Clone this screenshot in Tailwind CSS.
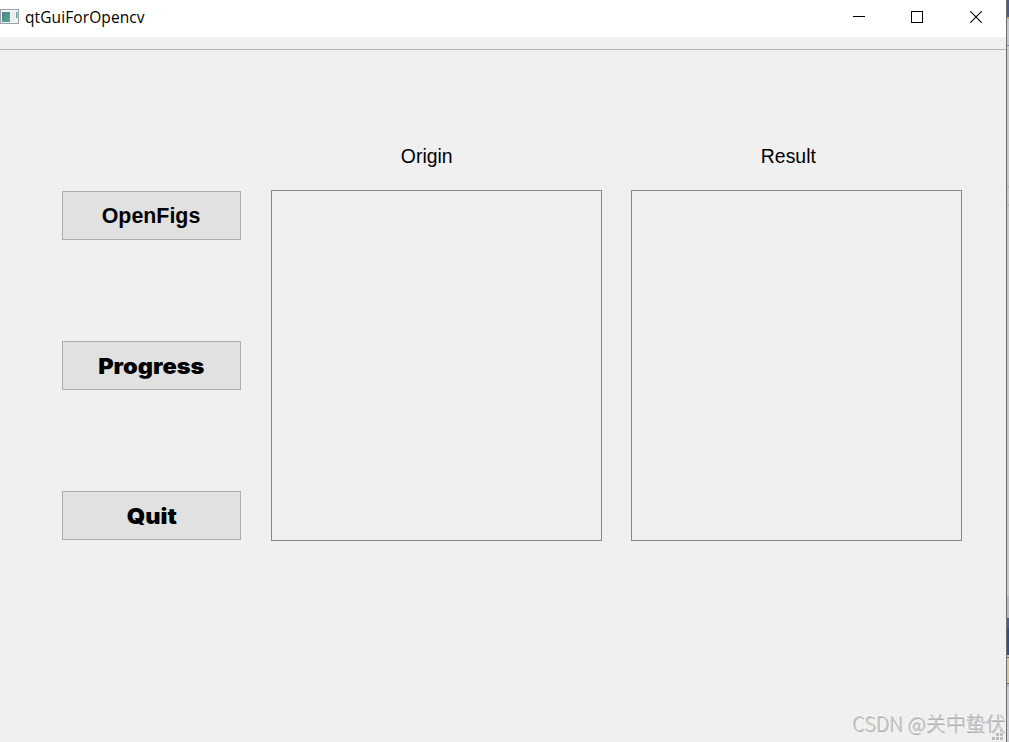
<!DOCTYPE html>
<html lang="en">
  <head>
    <meta charset="UTF-8" />
    <meta name="viewport" content="width=device-width, initial-scale=1.0" />
    <script src="https://cdn.jsdelivr.net/npm/@tailwindcss/browser@4"></script>
    <title>qtGuiForOpencv</title>
  </head>
  <body
    class="flex h-screen overflow-hidden bg-[#f0f0f0] font-['Liberation_Sans',Arial,sans-serif] text-black"
  >
    <div class="relative flex w-[1006px] shrink-0 flex-col">
      <!-- Title bar -->
      <header class="flex h-[37px] shrink-0 items-start bg-white">
        <svg class="mt-[9px] h-[15px] w-[19px]" viewBox="0 0 19 15">
          <defs>
            <linearGradient id="pane" x1="0" y1="0" x2="1" y2="1">
              <stop offset="0" stop-color="#4a7fa0" />
              <stop offset="1" stop-color="#55ad78" />
            </linearGradient>
          </defs>
          <rect x="0.5" y="0.5" width="18" height="14" fill="#f2f3f5" stroke="#9b9fa8" />
          <rect x="2" y="3" width="8" height="10" fill="url(#pane)" />
          <rect x="11" y="3" width="4" height="10" fill="#e9ebef" />
          <rect x="16" y="3" width="1.5" height="6" fill="#62a39a" />
        </svg>
        <h1
          class="ml-[6px] mt-[6px] font-['Open_Sans','Noto_Sans',sans-serif] text-[15.5px] leading-[22px] tracking-[0.1px]"
        >
          qtGuiForOpencv
        </h1>
        <div class="ml-auto mr-[24px] mt-[11px] flex gap-[46px]">
          <svg class="size-[12px]" viewBox="0 0 12 12" shape-rendering="crispEdges">
            <rect x="0" y="5" width="12" height="1" />
          </svg>
          <svg class="size-[12px]" viewBox="0 0 12 12" shape-rendering="crispEdges">
            <rect x="0.5" y="0.5" width="11" height="11" fill="none" stroke="#000" />
          </svg>
          <svg class="ml-px size-[12px]" viewBox="0 0 12 12">
            <path d="M0.3 0.3 11.7 11.7M11.7 0.3 0.3 11.7" stroke="#000" stroke-width="1.1" />
          </svg>
        </div>
      </header>
      <!-- Empty tool bar -->
      <div class="h-[13px] shrink-0 border-b border-[#b4b4b4]"></div>

      <main class="flex pl-[62px] pt-[94px]">
        <div class="mr-[30px] mt-[47px] flex w-[179px] flex-col gap-[101px]">
          <button
            class="h-[49px] border border-[#adadad] bg-[#e1e1e1] pr-px pt-[2px] text-[21.4px] font-bold"
          >
            OpenFigs
          </button>
          <button
            class="h-[49px] border border-[#adadad] bg-[#e1e1e1] pt-px font-['Inter',sans-serif] text-[21.4px] font-black"
          >
            <span class="inline-block scale-x-110">Progress</span>
          </button>
          <button
            class="h-[49px] border border-[#adadad] bg-[#e1e1e1] pt-px font-['Inter',sans-serif] text-[21.4px] font-black"
          >
            <span class="inline-block scale-x-110">Quit</span>
          </button>
        </div>
        <section class="mr-[29px] w-[331px]">
          <h2 class="mb-[22px] pl-[129px] text-xl leading-6">
            <span class="inline-block origin-[28px_60%] scale-x-[0.97] scale-y-105">Origin</span>
          </h2>
          <div class="h-[351px] border border-[#828790]"></div>
        </section>
        <section class="w-[331px]">
          <h2 class="mb-[22px] pl-[129px] text-xl leading-6">
            <span class="inline-block origin-[28px_60%] scale-x-[0.97] scale-y-105">Result</span>
          </h2>
          <div class="h-[351px] border border-[#828790]"></div>
        </section>
      </main>

      <!-- Size grip -->
      <svg
        class="absolute bottom-[2px] right-[3px] h-[11px] w-[11px]"
        viewBox="0 0 11 11"
        fill="#bcbcbc"
      >
        <path d="M8 0h3v3H8zM4 4h3v3H4zM8 4h3v3H8zM0 8h3v3H0zM4 8h3v3H4zM8 8h3v3H8z" />
      </svg>
      <p
        class="absolute bottom-[4px] right-px whitespace-nowrap font-['Noto_Sans_CJK_SC',sans-serif] text-[20px] font-light leading-[30px] tracking-[-0.05px] text-[#c9c9c9] [text-shadow:1px_1px_0_#b0b0b0,-1px_-1px_0_#fafafa]"
      >
        CSDN @关中蛰伏
      </p>
    </div>

    <!-- Sliver of the window behind -->
    <div class="flex w-[3px] shrink-0 flex-col border-l border-[#6e6e6e] bg-[#cbcbcb]">
      <div class="h-[17px] bg-[#4d5c8e]"></div>
      <div class="h-[2px] bg-[#c9a867]"></div>
      <div class="h-[26px] bg-[#c3c7d0]"></div>
      <div class="h-px bg-[#7486b8]"></div>
      <div class="h-[140px]"></div>
      <div class="h-[2px] bg-[#b9b9b9]"></div>
      <div class="h-[16px]"></div>
      <div class="h-[2px] bg-[#b9b9b9]"></div>
      <div class="h-[390px]"></div>
      <div class="h-[22px] bg-[#b9bac0]"></div>
      <div class="h-[10px] bg-[#4d5c8e]"></div>
      <div class="h-[27px] bg-[#364e86]"></div>
      <div class="h-[2px] bg-[#c5c8d2]"></div>
      <div class="h-[27px] border-y border-[#7a6a48] bg-[#d8c99c]"></div>
      <div class="h-[3px] bg-[#b4b8c8]"></div>
      <div class="flex-1 bg-[#cbccd1]"></div>
    </div>
  </body>
</html>
